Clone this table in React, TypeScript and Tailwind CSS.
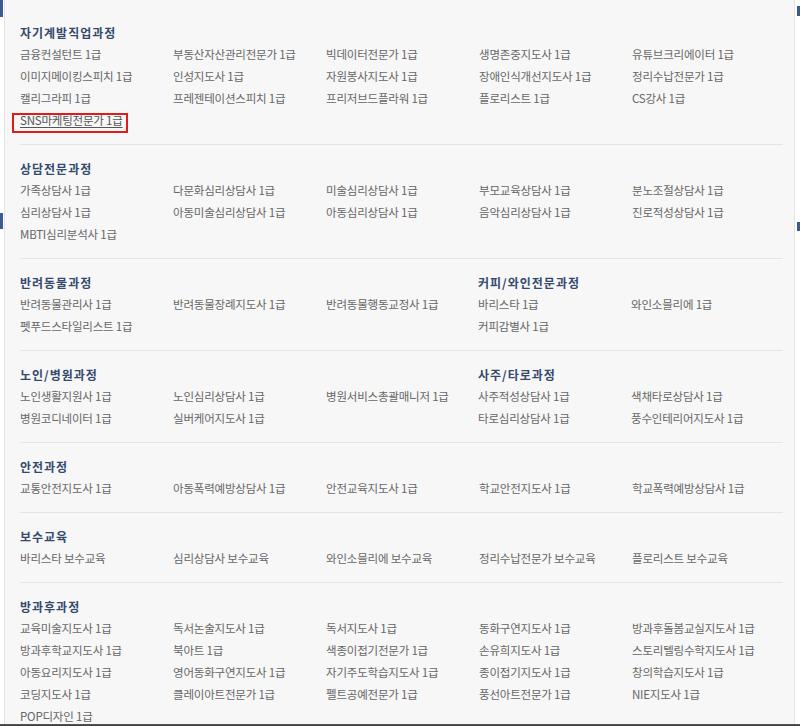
import React from 'react';

type Group = { title: string; items: string[] };

const full: Group[] = [
  {
    title: '자기계발직업과정',
    items: [
      '금융컨설턴트 1급', '부동산자산관리전문가 1급', '빅데이터전문가 1급', '생명존중지도사 1급', '유튜브크리에이터 1급',
      '이미지메이킹스피치 1급', '인성지도사 1급', '자원봉사지도사 1급', '장애인식개선지도사 1급', '정리수납전문가 1급',
      '캘리그라피 1급', '프레젠테이션스피치 1급', '프리저브드플라워 1급', '플로리스트 1급', 'CS강사 1급',
      'SNS마케팅전문가 1급',
    ],
  },
  {
    title: '상담전문과정',
    items: [
      '가족상담사 1급', '다문화심리상담사 1급', '미술심리상담사 1급', '부모교육상담사 1급', '분노조절상담사 1급',
      '심리상담사 1급', '아동미술심리상담사 1급', '아동심리상담사 1급', '음악심리상담사 1급', '진로적성상담사 1급',
      'MBTI심리분석사 1급',
    ],
  },
];

const split: [Group, Group][] = [
  [
    { title: '반려동물과정', items: ['반려동물관리사 1급', '반려동물장례지도사 1급', '반려동물행동교정사 1급', '펫푸드스타일리스트 1급'] },
    { title: '커피/와인전문과정', items: ['바리스타 1급', '와인소믈리에 1급', '커피감별사 1급'] },
  ],
  [
    { title: '노인/병원과정', items: ['노인생활지원사 1급', '노인심리상담사 1급', '병원서비스총괄매니저 1급', '병원코디네이터 1급', '실버케어지도사 1급'] },
    { title: '사주/타로과정', items: ['사주적성상담사 1급', '색채타로상담사 1급', '타로심리상담사 1급', '풍수인테리어지도사 1급'] },
  ],
];

const rest: Group[] = [
  { title: '안전과정', items: ['교통안전지도사 1급', '아동폭력예방상담사 1급', '안전교육지도사 1급', '학교안전지도사 1급', '학교폭력예방상담사 1급'] },
  { title: '보수교육', items: ['바리스타 보수교육', '심리상담사 보수교육', '와인소믈리에 보수교육', '정리수납전문가 보수교육', '플로리스트 보수교육'] },
  {
    title: '방과후과정',
    items: [
      '교육미술지도사 1급', '독서논술지도사 1급', '독서지도사 1급', '동화구연지도사 1급', '방과후돌봄교실지도사 1급',
      '방과후학교지도사 1급', '북아트 1급', '색종이접기전문가 1급', '손유희지도사 1급', '스토리텔링수학지도사 1급',
      '아동요리지도사 1급', '영어동화구연지도사 1급', '자기주도학습지도사 1급', '종이접기지도사 1급', '창의학습지도사 1급',
      '코딩지도사 1급', '클레이아트전문가 1급', '펠트공예전문가 1급', '풍선아트전문가 1급', 'NIE지도사 1급',
      'POP디자인 1급',
    ],
  },
];

function Title({ children }: { children: string }) {
  return <h3 className="h-[20px] mb-[1px] text-[12px] leading-[20px] font-bold tracking-[1px] text-[#34496d]">{children}</h3>;
}

function Item({ label }: { label: string }) {
  if (label === 'SNS마케팅전문가 1급') {
    return (
      <li className="h-[22px] pb-[1px] leading-[21px] whitespace-nowrap">
        <a className="relative inline-block text-[#555] underline underline-offset-2">
          {label}
          <span className="absolute -left-[8px] -right-[5px] top-[3px] h-[20px] border-2 border-[#e01b1b]" />
        </a>
      </li>
    );
  }
  return <li className="h-[22px] pb-[1px] leading-[21px] whitespace-nowrap">{label}</li>;
}

function Items({ items, cols }: { items: string[]; cols: 2 | 3 | 5 }) {
  const grid =
    cols === 5 ? 'grid grid-cols-[repeat(5,153px)]' : cols === 3 ? 'grid grid-cols-[repeat(3,153px)]' : 'grid grid-cols-[repeat(2,153px)]';
  return (
    <ul className={grid}>
      {items.map((i) => (
        <Item key={i} label={i} />
      ))}
    </ul>
  );
}

function Section({ children }: { children: React.ReactNode }) {
  return <section className="border-t border-[#e4e4e4] pt-[14px] pb-[12px] first:border-t-0">{children}</section>;
}

export default function App() {
  return (
    <div className="relative w-[800px] h-[726px] overflow-hidden bg-white" style={{ fontFamily: '"Noto Sans CJK KR", "Noto Sans", sans-serif' }}>
      {/* bits of the page behind the menu */}
      <span className="absolute left-0 top-0 w-[3px] h-[17px] bg-[#3c5a92]" />
      <span className="absolute left-0 top-[213px] w-[3px] h-[16px] bg-[#3c5a92]" />
      <span className="absolute right-0 top-[6px] w-[3px] h-[10px] bg-[#3c5a92]" />
      <span className="absolute right-0 top-[222px] w-[3px] h-[9px] bg-[#3c5a92]" />

      <div className="flex flex-col h-full">
        <div className="flex-1 overflow-hidden ml-[4px] mr-[5px] border-x border-[#e3e3e3] bg-[#f7f7f7] pl-[15px] pr-[11px] pt-[9px] text-[11.5px] tracking-[-0.2px] text-[#666]">
          {full.map((s) => (
            <Section key={s.title}>
              <Title>{s.title}</Title>
              <Items items={s.items} cols={5} />
            </Section>
          ))}
          {split.map(([a, b]) => (
            <Section key={a.title}>
              <div className="flex">
                <div className="w-[458px]">
                  <Title>{a.title}</Title>
                  <Items items={a.items} cols={3} />
                </div>
                <div>
                  <Title>{b.title}</Title>
                  <Items items={b.items} cols={2} />
                </div>
              </div>
            </Section>
          ))}
          {rest.map((s) => (
            <Section key={s.title}>
              <Title>{s.title}</Title>
              <Items items={s.items} cols={5} />
            </Section>
          ))}
        </div>
        <div className="h-[2px] bg-gradient-to-b from-[#5a5a5a] to-[#3a3a3a]" />
      </div>
    </div>
  );
}
